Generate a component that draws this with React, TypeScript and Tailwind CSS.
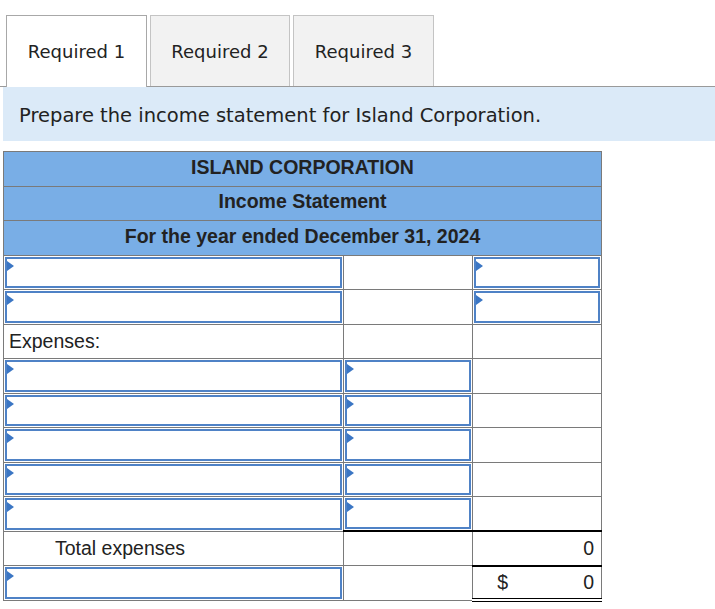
import React from "react";

const Marker = () => (
	<span className="absolute left-0 top-[2px] w-0 h-0 border-t-[5px] border-b-[5px] border-l-[7px] border-t-transparent border-b-transparent border-l-[#3b76c4]" />
);

const InputBox = () => (
	<div className="relative h-full w-full border-2 border-[#4f82c6] bg-white">
		<Marker />
	</div>
);

type Row = {
	label?: string;
	indent?: boolean;
	c1?: boolean;
	c2?: boolean;
	c3?: boolean;
	v3?: string;
	dollar?: boolean;
	topLine2?: boolean;
	topLine3?: boolean;
	doubleBottom?: boolean;
};

const rows: Row[] = [
	{ c1: true, c3: true },
	{ c1: true, c3: true },
	{ label: "Expenses:" },
	{ c1: true, c2: true },
	{ c1: true, c2: true },
	{ c1: true, c2: true },
	{ c1: true, c2: true },
	{ c1: true, c2: true },
	{ label: "Total expenses", indent: true, v3: "0", topLine2: true, topLine3: true },
	{ c1: true, v3: "0", dollar: true, topLine3: true, doubleBottom: true },
];

const App = () => {
	const tabBase = "h-[71px] flex items-center justify-center border border-b-0 text-[18px] text-[#222]";
	return (
		<div className="w-[715px] h-[609px] bg-white relative" style={{ fontFamily: "'DejaVu Sans', Verdana, sans-serif" }}>
			<div className="pt-[15px] flex items-end border-b border-[#9a9a9a] pl-[6px] gap-[3px]">
				<div className={tabBase + " w-[141px] bg-white border-[#a8a8a8] -mb-px h-[72px]"}>Required 1</div>
				<div className={tabBase + " w-[140px] bg-[#f2f2f2] border-[#c4c4c4]"}>Required 2</div>
				<div className={tabBase + " w-[141px] bg-[#f2f2f2] border-[#c4c4c4]"}>Required 3</div>
			</div>
			<div className="ml-[3px] h-[54px] bg-[#dbeaf8] flex items-center pl-[16px] pt-[4px] text-[19.5px] text-[#222]">
				Prepare the income statement for Island Corporation.
			</div>
			<table
				className="mt-[10px] ml-[3px] border-collapse w-[599px] text-[#222] border border-[#6e6e6e]"
				style={{ fontFamily: "'Liberation Sans', Arial, sans-serif" }}
			>
				<colgroup>
					<col className="w-[341px]" />
					<col className="w-[129px]" />
					<col className="w-[129px]" />
				</colgroup>
				<tbody>
					{["ISLAND CORPORATION", "Income Statement", "For the year ended December 31, 2024"].map((t) => (
						<tr key={t} className="h-[34.5px]">
							<td colSpan={3} className="bg-[#79aee6] border border-[#7a7a7a] text-center font-bold text-[19.5px] p-0 pb-[3px]">
								{t}
							</td>
						</tr>
					))}
					{rows.map((r, i) => (
						<tr key={i} className="h-[34.5px]">
							<td className="border border-[#7a7a7a] p-[1px] h-[34.5px] text-[19.5px]">
								{r.c1 ? <InputBox /> : r.label ? (
									<span className={r.indent ? "pl-[50px]" : "pl-[4px]"}>{r.label}</span>
								) : null}
							</td>
							<td className={"border border-[#7a7a7a] p-[1px] h-[34.5px] " + (r.topLine2 ? "border-t-2 border-t-black" : "")}>
								{r.c2 ? <InputBox /> : null}
							</td>
							<td
								className={
									"border border-[#7a7a7a] p-[1px] h-[34.5px] text-[19.5px] " +
									(r.topLine3 ? "border-t-2 border-t-black " : "") +
									(r.doubleBottom ? "border-b-[4px] border-b-black border-double" : "")
								}
							>
								{r.c3 ? <InputBox /> : r.v3 ? (
									<div className="flex justify-between items-center px-[6px]">
										<span className="pl-[17px]">{r.dollar ? "$" : ""}</span>
										<span>{r.v3}</span>
									</div>
								) : null}
							</td>
						</tr>
					))}
				</tbody>
			</table>
		</div>
	);
};

export default App;
